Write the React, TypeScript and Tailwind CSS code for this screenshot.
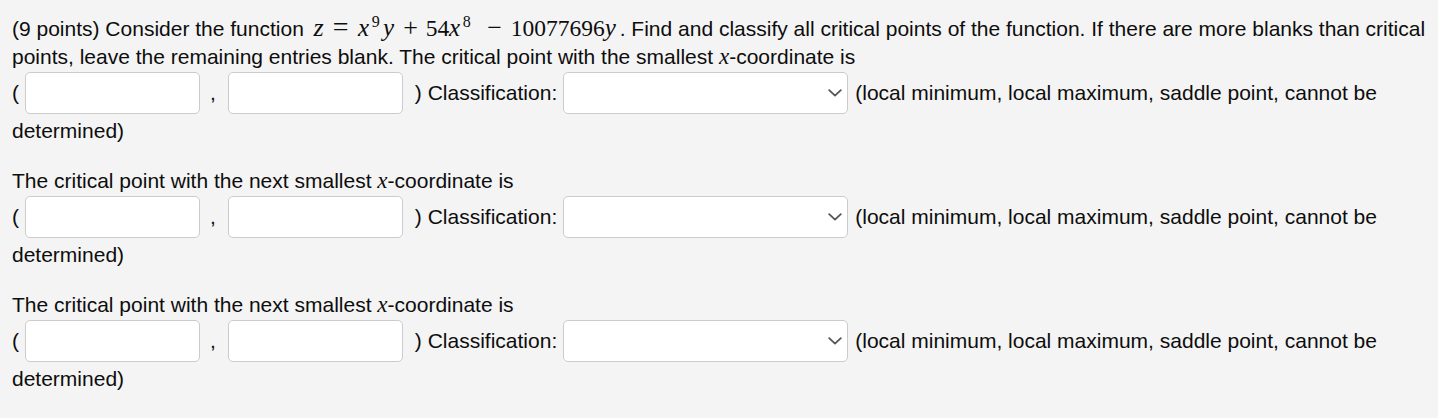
import React from 'react';

const sans = { fontFamily: '"Liberation Sans", Arial, sans-serif' };
const serif = { fontFamily: '"Liberation Serif", "Times New Roman", serif' };

function Chevron() {
  return (
    <svg width="14" height="8" viewBox="0 0 14 8" fill="none">
      <path d="M1.2 1.2 L7 6.6 L12.8 1.2" stroke="#555" strokeWidth="1.8" strokeLinecap="round" strokeLinejoin="round" />
    </svg>
  );
}

function PointRow() {
  return (
    <>
      <div className="flex items-center h-[44px] whitespace-nowrap">
        <span>(</span>
        <input type="text" className="ml-[6px] w-[175px] h-[42px] bg-white border border-[#cccccc] rounded-[5px] outline-none" />
        <span className="ml-[10px] mr-[12px]">,</span>
        <input type="text" className="w-[175px] h-[42px] bg-white border border-[#cccccc] rounded-[5px] outline-none" />
        <span className="ml-[12px]">) Classification:</span>
        <div className="relative ml-[6px] w-[285px] h-[42px]">
          <select className="appearance-none w-full h-full bg-white border border-[#cccccc] rounded-[5px] outline-none" defaultValue="">
            <option value=""></option>
            <option>local minimum</option>
            <option>local maximum</option>
            <option>saddle point</option>
            <option>cannot be determined</option>
          </select>
          <span className="absolute right-[6px] top-[17px] pointer-events-none">
            <Chevron />
          </span>
        </div>
        <span className="ml-[7px]">(local minimum, local maximum, saddle point, cannot be</span>
      </div>
      <div className="leading-[31px]">determined)</div>
    </>
  );
}

function Formula() {
  return (
    <span className="text-[24px] leading-none whitespace-nowrap" style={serif}>
      <i className="inline-block w-[14px] text-right text-[26px]">z</i>
      <span className="inline-block ml-[8px] w-[18px] text-center text-[28px]">=</span>
      <i className="inline-block ml-[6px] w-[16px] text-center text-[25px]">x</i>
      <span className="inline-block w-[9px] text-[16px] align-[9px]">9</span>
      <i className="inline-block w-[16px] text-center text-[25px]">y</i>
      <span className="inline-block ml-[5px] w-[18px] text-center text-[26px]">+</span>
      <span className="inline-block ml-[6px] w-[21px] text-[23.5px]">54</span>
      <i className="inline-block w-[16px] text-center text-[25px]">x</i>
      <span className="inline-block w-[9px] text-[16px] align-[9px]">8</span>
      <span className="inline-block ml-[15px] w-[16px] text-center text-[26px]">−</span>
      <span className="inline-block ml-[8px] text-[23.5px]">10077696</span>
      <i className="inline-block w-[15px] text-left text-[25px]">y</i>
    </span>
  );
}

function XVar() {
  return <i className="text-[23px] leading-none" style={serif}>x</i>;
}

export default function App() {
  return (
    <div className="min-h-screen bg-[#f4f4f4] text-[#0d0d0d] text-[21px] pl-[12px] pt-[13px]" style={sans}>
      <div className="leading-[28px] whitespace-nowrap">
        (9 points) Consider the function <Formula />. Find and classify all critical points of the function. If there are more blanks than critical
      </div>
      <div className="leading-[28px] whitespace-nowrap">
        points, leave the remaining entries blank. The critical point with the smallest <XVar />-coordinate is
      </div>
      <PointRow />

      <div className="mt-[21px] leading-[28px] whitespace-nowrap">
        The critical point with the next smallest <XVar />-coordinate is
      </div>
      <PointRow />

      <div className="mt-[21px] leading-[28px] whitespace-nowrap">
        The critical point with the next smallest <XVar />-coordinate is
      </div>
      <PointRow />
    </div>
  );
}
